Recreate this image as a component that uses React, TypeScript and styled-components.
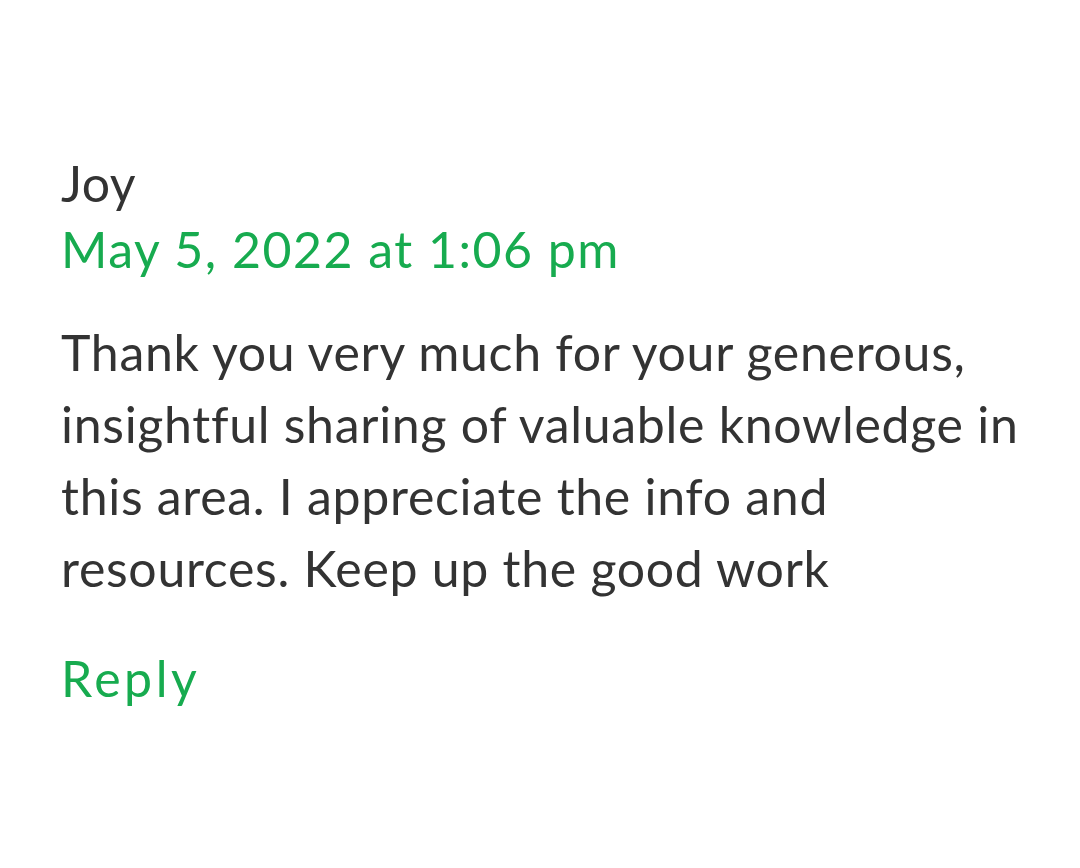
import React from "react";
import styled, { createGlobalStyle } from "styled-components";

const Global = createGlobalStyle`
  html, body { margin: 0; padding: 0; background: #ffffff; }
  body { font-family: "Lato", "Open Sans", sans-serif; }
`;

const Page = styled.div`
  width: 1080px;
  height: 868px;
  box-sizing: border-box;
  padding: 150px 20px 0 61px;
  display: flex;
  flex-direction: column;
`;

const Author = styled.div`
  font-size: 50px;
  line-height: 66px;
  color: #333333;
  font-weight: 400;
  letter-spacing: 0.5px;
`;

const DateLink = styled.a`
  font-size: 50px;
  line-height: 66px;
  color: #17ab4f;
  text-decoration: none;
  letter-spacing: 1.5px;
  align-self: flex-start;
`;

const Body = styled.p`
  margin: 34px 0 0;
  font-size: 50px;
  line-height: 72px;
  color: #333333;
  letter-spacing: 0.7px;
  white-space: nowrap;
`;

const ReplyLink = styled.a`
  margin-top: 38px;
  font-size: 50px;
  line-height: 72px;
  color: #17ab4f;
  text-decoration: none;
  letter-spacing: 3.5px;
  align-self: flex-start;
`;

export default function App() {
  return (
    <>
      <Global />
      <Page>
        <Author>Joy</Author>
        <DateLink href="#">May 5, 2022 at 1:06 pm</DateLink>
        <Body>
          Thank you very much for your generous,
          <br />
          insightful sharing of valuable knowledge in
          <br />
          this area. I appreciate the info and
          <br />
          resources. Keep up the good work
        </Body>
        <ReplyLink href="#">Reply</ReplyLink>
      </Page>
    </>
  );
}
